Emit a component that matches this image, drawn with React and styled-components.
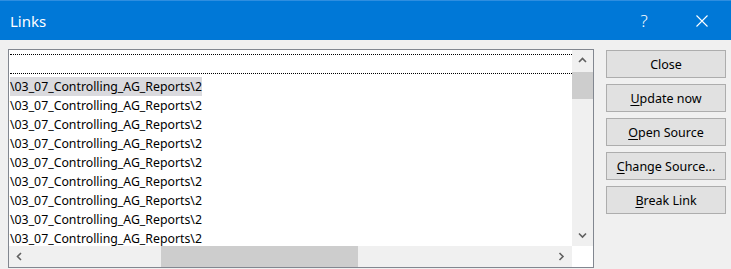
import React from 'react';
import styled, { createGlobalStyle } from 'styled-components';

const GlobalStyle = createGlobalStyle`
    html, body {
        margin: 0;
        padding: 0;
        background: #f0f0f0;
    }
    body {
        font-family: "Noto Sans", "Open Sans", sans-serif;
    }
`;

const rows = Array.from({ length: 9 }, () => '\\03_07_Controlling_AG_Reports\\2');

const buttons = [
    { label: 'Close' },
    { key: 'U', label: 'pdate now' },
    { key: 'O', label: 'pen Source' },
    { key: 'C', label: 'hange Source...' },
    { key: 'B', label: 'reak Link' },
];

const Chevron = ({ dir }) => {
    const paths = {
        up: 'M1 5 L4.5 1.5 L8 5',
        down: 'M1 1.5 L4.5 5 L8 1.5',
        left: 'M5 1 L1.5 4.5 L5 8',
        right: 'M1.5 1 L5 4.5 L1.5 8',
    };
    const w = dir === 'up' || dir === 'down' ? 9 : 7;
    const h = dir === 'up' || dir === 'down' ? 7 : 9;
    return (
        <svg width={w} height={h} viewBox={`0 0 ${w} ${h}`}>
            <path d={paths[dir]} fill="none" stroke="#606060" strokeWidth="1.6" />
        </svg>
    );
};

const App = () => {
    return (
        <Window>
            <GlobalStyle />
            <TitleBar>
                <Title>Links</Title>
                <CaptionButton>?</CaptionButton>
                <CaptionButton>
                    <svg width="12" height="12" viewBox="0 0 12 12">
                        <path d="M0.5 0.5 L11.5 11.5 M11.5 0.5 L0.5 11.5" stroke="#fff" strokeWidth="1.1" />
                    </svg>
                </CaptionButton>
            </TitleBar>
            <Body>
                <ListBox>
                    <Content>
                        <FocusRow />
                        {rows.map((text, i) => (
                            <Row key={i}>
                                <Cell selected={i === 0}>{text}</Cell>
                            </Row>
                        ))}
                    </Content>
                    <VScroll>
                        <ArrowBox>
                            <Chevron dir="up" />
                        </ArrowBox>
                        <VTrack>
                            <VThumb />
                        </VTrack>
                        <ArrowBox>
                            <Chevron dir="down" />
                        </ArrowBox>
                    </VScroll>
                    <HScroll>
                        <ArrowBox>
                            <Chevron dir="left" />
                        </ArrowBox>
                        <HTrack>
                            <HThumb />
                        </HTrack>
                        <ArrowBox>
                            <Chevron dir="right" />
                        </ArrowBox>
                    </HScroll>
                    <Corner />
                </ListBox>
                <ButtonColumn>
                    {buttons.map((b) => (
                        <Button key={b.label}>
                            {b.key && <u>{b.key}</u>}
                            {b.label}
                        </Button>
                    ))}
                </ButtonColumn>
            </Body>
        </Window>
    );
};

const Window = styled.div`
    width: 731px;
    height: 269px;
    background: #f0f0f0;
    overflow: hidden;
`;

const TitleBar = styled.div`
    height: 39px;
    border-top: 1px solid #2e8ee0;
    background: #0078d7;
    display: flex;
    align-items: center;
    padding-left: 10px;
`;

const Title = styled.div`
    flex: 1;
    color: #fff;
    font-size: 15px;
    margin-top: 1px;
`;

const CaptionButton = styled.div`
    width: 58px;
    height: 39px;
    display: flex;
    align-items: center;
    justify-content: center;
    color: #fff;
    font-size: 17px;
    font-weight: 300;
`;

const Body = styled.div`
    display: flex;
    gap: 12px;
    padding: 9px 6px 0 8px;
`;

const ListBox = styled.div`
    width: 584px;
    height: 217px;
    flex: none;
    border: 1px solid #828790;
    background: #fff;
    display: grid;
    grid-template-columns: 1fr 21px;
    grid-template-rows: 1fr 21px;
    overflow: hidden;
`;

const Content = styled.div`
    padding: 4px 0 0 1px;
    overflow: hidden;
    font-size: 12.3px;
    color: #000;
`;

const FocusRow = styled.div`
    height: 18px;
    border-top: 1px dotted #000;
    border-bottom: 1px dotted #000;
    margin-bottom: 3px;
`;

const Row = styled.div`
    height: 19px;
    line-height: 19px;
    white-space: nowrap;
`;

const Cell = styled.span`
    display: inline-block;
    height: 19px;
    background: ${(p) => (p.selected ? '#dadade' : 'transparent')};
`;

const VScroll = styled.div`
    background: #f0f0f0;
    display: grid;
    grid-template-rows: 21px 1fr 21px;
`;

const HScroll = styled.div`
    background: #f0f0f0;
    display: grid;
    grid-template-columns: 21px 1fr 21px;
`;

const ArrowBox = styled.div`
    display: flex;
    align-items: center;
    justify-content: center;
`;

const VTrack = styled.div`
    padding-top: 1px;
`;

const VThumb = styled.div`
    height: 27px;
    background: #cdcdcd;
`;

const HTrack = styled.div`
    padding-left: 131px;
`;

const HThumb = styled.div`
    width: 197px;
    height: 100%;
    background: #cdcdcd;
`;

const Corner = styled.div`
    background: #fff;
`;

const ButtonColumn = styled.div`
    display: flex;
    flex-direction: column;
    gap: 6px;
    margin-top: 1px;
`;

const Button = styled.div`
    width: 118px;
    height: 26px;
    border: 1px solid #adadad;
    background: #e1e1e1;
    display: flex;
    align-items: center;
    justify-content: center;
    font-size: 12.5px;
    color: #000;

    u {
        text-underline-offset: 2px;
    }
`;

export default App;
